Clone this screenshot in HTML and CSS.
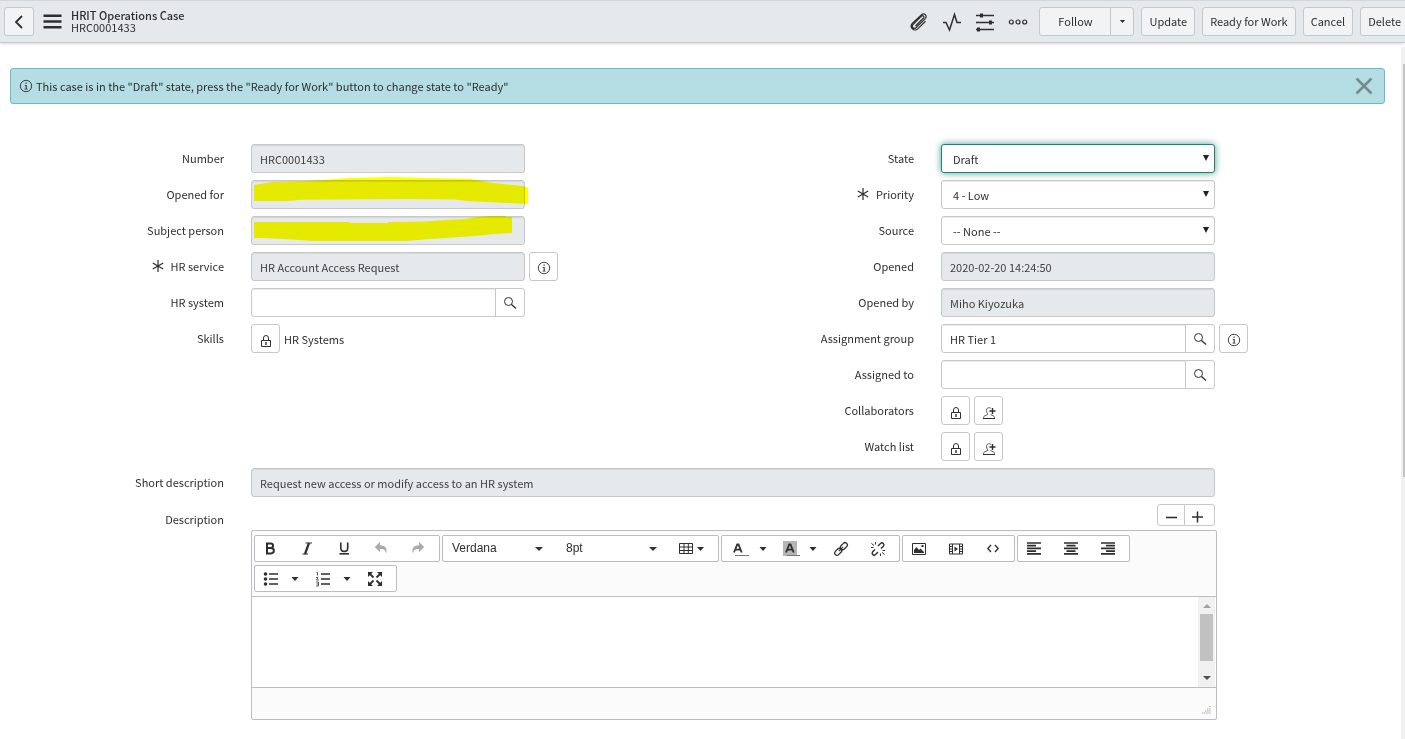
FILE: index.html
```html
<!DOCTYPE html>
<html lang="en">
<head>
<meta charset="utf-8">
<title>HRC0001433 | HRIT Operations Case</title>
<link rel="stylesheet" href="styles.css">
</head>
<body>
<svg class="sprite" aria-hidden="true">
  <symbol id="info" viewBox="0 0 14 14"><circle cx="7" cy="7" r="5.700" fill="none" stroke="currentColor" stroke-width=".9"/><path d="M6.500 3.500h1.200v1.300H6.500zM5.700 6h2v3.700h.9v.8H5.500v-.8h1.100V6.800h-.9z" fill="currentColor"/></symbol>
  <symbol id="search" viewBox="0 0 14 14"><circle cx="5.500" cy="5.500" r="4" fill="none" stroke="currentColor"/><path d="M8.500 8.500l4.500 4" stroke="currentColor" stroke-width="1.400"/></symbol>
  <symbol id="lock" viewBox="0 0 14 14"><path d="M4.500 6.500V4a2.500 2.500 0 0 1 5 0v2.500M2.500 6.500h9v6h-9z" fill="none" stroke="currentColor"/><path d="M6.300 8h1.400v3H6.300z" fill="currentColor"/></symbol>
  <symbol id="adduser" viewBox="0 0 14 14"><path d="M9 2.500C7.500 1 4.500 1.500 4.500 4.500c0 1.500.5 2 1 3v1L2.500 10c-.8.400-1 1-1 2.500h11c0-1.500-.2-2.100-1-2.500L8.500 8.500" fill="none" stroke="currentColor" stroke-width=".8"/><path d="M10.500 2v6M7.500 5h6" stroke="currentColor" stroke-width="1.400"/><path d="M1 12.500h12" stroke="currentColor"/></symbol>
  <symbol id="star" viewBox="0 0 12 12"><path d="M6 0v12M.8 3l10.400 6M11.200 3L.8 9" stroke="currentColor" stroke-width="1.200"/></symbol>
  <symbol id="caret" viewBox="0 0 8 4"><path d="M.5 0h7L4 4z" fill="currentColor"/></symbol>
</svg>

<header class="topbar">
  <div class="topbar-row">
    <button class="btn back" aria-label="Back"><svg width="10" height="14" viewBox="0 0 10 14"><path d="M8 1L2 7l6 6" fill="none" stroke="currentColor" stroke-width="1.800"/></svg></button>
    <button class="plain menu" aria-label="Menu"><svg width="19" height="15" viewBox="0 0 19 15"><path d="M.5 1.800h18M.5 7.500h18M.5 13.200h18" stroke="currentColor" stroke-width="2.600"/></svg></button>
    <h1 class="title"><span class="title-main">HRIT Operations Case</span><span>HRC0001433</span></h1>
    <nav class="tools" aria-label="Record tools">
      <button class="plain" aria-label="Attachments"><svg width="20" height="20" viewBox="0 0 20 20"><path d="M6.500 14l8-8c1.200-1.400-.6-3-2-1.800L4 12.700c-2 2.200.7 5 2.900 3L16.300 6.600c2.600-2.800-1.200-6.200-4-3.700L3.700 11c-4 4 1.300 9.600 5.300 5.600l7.500-7.400" fill="none" stroke="currentColor" stroke-width="1.200"/></svg></button>
      <button class="plain" aria-label="Activity stream"><svg width="20" height="20" viewBox="0 0 20 20"><path d="M1 10.500h3L7.500 18l5-15.500 2.500 8h4" fill="none" stroke="currentColor" stroke-width="1.500"/></svg></button>
      <button class="plain" aria-label="Personalize form"><svg width="20" height="20" viewBox="0 0 20 20"><path d="M1 3.500h18M1 10.500h18M1 17.500h18" stroke="currentColor" stroke-width="1.400"/><path d="M5 1.500h3v4H5zM14 8.500h3v4h-3zM2 15.500h3v4H2z" fill="currentColor"/></svg></button>
      <button class="plain" aria-label="More options"><svg width="20" height="20" viewBox="0 0 20 20"><g fill="none" stroke="currentColor" stroke-width="1.200"><circle cx="3.300" cy="10" r="2"/><circle cx="10" cy="10" r="2"/><circle cx="16.700" cy="10" r="2"/></g></svg></button>
    </nav>
    <div class="actions">
      <div class="split"><button class="btn follow">Follow</button><button class="btn follow-more" aria-label="Follow options"><svg width="7" height="3"><use href="#caret"/></svg></button></div>
      <button class="btn">Update</button>
      <button class="btn">Ready for Work</button>
      <button class="btn">Cancel</button>
      <button class="btn">Delete</button>
    </div>
  </div>
</header>

<div class="page">
  <main class="content">
    <div class="banner" role="status">
      <svg width="14" height="14"><use href="#info"/></svg>
      <span class="banner-text">This case is in the "Draft" state, press the "Ready for Work" button to change state to "Ready"</span>
      <button class="plain close" aria-label="Close"><svg width="18" height="18" viewBox="0 0 18 18"><path d="M1.500 1.500l15 15M16.500 1.500l-15 15" stroke="currentColor" stroke-width="2.600"/></svg></button>
    </div>

    <form class="form">
      <div class="columns">
        <div class="column">
          <div class="row"><label class="label" for="number">Number</label><div class="field"><input class="input" id="number" value="HRC0001433" readonly></div></div>
          <div class="row"><label class="label" for="openedfor">Opened for</label><div class="field marked"><input class="input" id="openedfor" readonly>
            <svg class="marker" width="280" height="32" viewBox="0 0 280 32"><path d="M3 9L12 7.500 21 6 56 5 79 3.500 98 2 139 1 177 2 221 3 242 7 272 10 277 12V28L256 27 216 25 204 23.500 156 23 51 23.700 36 25H3z" fill="#ff0"/></svg></div></div>
          <div class="row"><label class="label" for="subject">Subject person</label><div class="field marked"><input class="input" id="subject" readonly>
            <svg class="marker" width="280" height="32" viewBox="0 0 280 32"><path d="M3 10H98L99 11H137V10L174 9.500 194 8 214 7 222 5.500 239 4H254L255 5H261V21L244 22 224 24 194 26 179 27 154 29H62L42 27.500 14 26H3z" fill="#ff0"/></svg></div></div>
          <div class="row"><label class="label" for="service"><svg width="12" height="12"><use href="#star"/></svg>HR service</label><div class="field"><input class="input" id="service" value="HR Account Access Request" readonly></div><div class="aside"><button type="button" class="icon-btn" aria-label="Preview HR service"><svg width="14" height="14"><use href="#info"/></svg></button></div></div>
          <div class="row"><label class="label" for="system">HR system</label><div class="field"><input class="input joined" id="system"><button type="button" class="icon-btn lookup" aria-label="Look up HR system"><svg width="14" height="14"><use href="#search"/></svg></button></div></div>
          <div class="row"><span class="label">Skills</span><div class="field list"><button type="button" class="icon-btn low" aria-label="Unlock skills"><svg width="14" height="14"><use href="#lock"/></svg></button><span>HR Systems</span></div></div>
        </div>
        <div class="column">
          <div class="row"><label class="label" for="state">State</label><div class="field pick"><select class="input select active" id="state"><option>Draft</option></select></div></div>
          <div class="row"><label class="label" for="priority"><svg width="12" height="12"><use href="#star"/></svg>Priority</label><div class="field pick"><select class="input select" id="priority"><option>4 - Low</option></select></div></div>
          <div class="row"><label class="label" for="source">Source</label><div class="field pick"><select class="input select" id="source"><option>-- None --</option></select></div></div>
          <div class="row"><label class="label" for="opened">Opened</label><div class="field"><input class="input" id="opened" value="2020-02-20 14:24:50" readonly></div></div>
          <div class="row"><label class="label" for="openedby">Opened by</label><div class="field"><input class="input" id="openedby" value="Miho Kiyozuka" readonly></div></div>
          <div class="row"><label class="label" for="group">Assignment group</label><div class="field"><input class="input joined" id="group" value="HR Tier 1"><button type="button" class="icon-btn lookup" aria-label="Look up group"><svg width="14" height="14"><use href="#search"/></svg></button></div><div class="aside"><button type="button" class="icon-btn" aria-label="Preview group"><svg width="14" height="14"><use href="#info"/></svg></button></div></div>
          <div class="row"><label class="label" for="assigned">Assigned to</label><div class="field"><input class="input joined" id="assigned"><button type="button" class="icon-btn lookup" aria-label="Look up assignee"><svg width="14" height="14"><use href="#search"/></svg></button></div></div>
          <div class="row"><span class="label">Collaborators</span><div class="field list"><button type="button" class="icon-btn low" aria-label="Unlock collaborators"><svg width="14" height="14"><use href="#lock"/></svg></button><button type="button" class="icon-btn low" aria-label="Add me to collaborators"><svg width="14" height="14"><use href="#adduser"/></svg></button></div></div>
          <div class="row"><span class="label">Watch list</span><div class="field list"><button type="button" class="icon-btn low" aria-label="Unlock watch list"><svg width="14" height="14"><use href="#lock"/></svg></button><button type="button" class="icon-btn low" aria-label="Add me to watch list"><svg width="14" height="14"><use href="#adduser"/></svg></button></div></div>
        </div>
      </div>

      <div class="row wide"><label class="label" for="short">Short description</label><div class="field"><input class="input" id="short" value="Request new access or modify access to an HR system" readonly></div></div>

      <div class="row wide top">
        <label class="label" for="desc">Description</label>
        <div class="description">
          <div class="resize">
            <button type="button" class="size-btn" aria-label="Shrink"><svg width="13" height="13" viewBox="0 0 13 13"><path d="M1 7.500h11" stroke="currentColor" stroke-width="1.600"/></svg></button><button type="button" class="size-btn" aria-label="Grow"><svg width="13" height="13" viewBox="0 0 13 13"><path d="M1 7h11M6.500 1.500v11" stroke="currentColor" stroke-width="1.500"/></svg></button>
          </div>
          <div class="editor">
            <div class="toolbar">
              <div class="group">
                <button type="button" class="tool" aria-label="Bold"><svg width="16" height="16" viewBox="0 0 16 16"><path d="M5 2.500v10M4 2.500h4.500c3.400 0 3.400 4.600 0 4.600H5h4c3.800 0 3.800 5.400 0 5.400H4" fill="none" stroke="currentColor" stroke-width="2"/></svg></button>
                <button type="button" class="tool" aria-label="Italic"><svg width="16" height="16" viewBox="0 0 16 16"><path d="M6.500 2H13M3.500 13H9" stroke="currentColor"/><path d="M10 2l-4 11" stroke="currentColor" stroke-width="2.200"/></svg></button>
                <button type="button" class="tool" aria-label="Underline"><svg width="16" height="16" viewBox="0 0 16 16"><path d="M4.800 1.500V7c0 4.500 6.900 4.500 6.900 0V1.500" fill="none" stroke="currentColor" stroke-width="1.600"/><path d="M3.500 12.800H13" stroke="currentColor" stroke-width="1.600"/></svg></button>
                <button type="button" class="tool dim" aria-label="Undo"><svg width="16" height="16" viewBox="0 0 16 16"><path d="M7 1v3.200c5 0 8 2.800 6 8.800 0-3.700-2-5-6-5v3.200L1.800 6.100z" fill="currentColor"/></svg></button>
                <button type="button" class="tool dim" aria-label="Redo"><svg width="16" height="16" viewBox="0 0 16 16"><path d="M9 1v3.200c-5 0-8 2.800-6 8.800 0-3.700 2-5 6-5v3.200l5.200-5.100z" fill="currentColor"/></svg></button>
              </div>
              <div class="group selects">
                <span class="mini"><select aria-label="Font family"><option>Verdana</option></select></span>
                <span class="mini"><select aria-label="Font size"><option>8pt</option></select></span>
                <button type="button" class="tool table" aria-label="Table"><svg width="28" height="16" viewBox="0 0 28 16"><path d="M1.500 2.500h13v10h-13zM1.500 6h13M1.500 9.500h13M6 2.500v10M10.300 2.500v10" fill="none" stroke="currentColor"/><path d="M19 6h7L22.500 10z" fill="currentColor"/></svg></button>
              </div>
              <div class="group colors">
                <div class="pair"><button type="button" class="tool" aria-label="Text color"><svg width="18" height="16" viewBox="0 0 18 16"><path d="M2 11.500L5.200 3.500h1.300L9.700 11.500M3.200 8.700h5.300" fill="none" stroke="currentColor" stroke-width="1.800"/><path d="M3 14.500h14" stroke="#777"/></svg></button><button type="button" class="tool more" aria-label="Text colors"><svg width="8" height="4"><use href="#caret"/></svg></button></div>
                <div class="pair"><button type="button" class="tool" aria-label="Background color"><svg width="18" height="16" viewBox="0 0 18 16"><path d="M1 0h14v15H1z" fill="#b5b5b5"/><path d="M4 11.500L7.200 3.500h1.300l3.200 8M5.200 8.700h5.300" fill="none" stroke="currentColor" stroke-width="1.800"/><path d="M5 14.500h13" stroke="#777"/></svg></button><button type="button" class="tool more" aria-label="Background colors"><svg width="8" height="4"><use href="#caret"/></svg></button></div>
                <button type="button" class="tool" aria-label="Insert link"><svg width="16" height="16" viewBox="0 0 16 16"><g fill="none" stroke="currentColor" stroke-width="1.300" transform="rotate(-45 8 8)"><rect x="0" y="5.700" width="8" height="4.600" rx="2.300"/><rect x="8" y="5.700" width="8" height="4.600" rx="2.300"/><path d="M5 8h6"/></g></svg></button>
                <button type="button" class="tool" aria-label="Remove link"><svg width="16" height="16" viewBox="0 0 16 16"><g fill="none" stroke="currentColor" stroke-width="1.400"><path d="M8 5l2.500-2.500c2-1.800 4.500.8 2.800 2.700L11 7.500M8 11l-2.500 2.500c-2 1.800-4.500-.8-2.800-2.700L5 8.500"/><path d="M5.500 1v2.500M1.500 2.500l2.500 2M1 6.500h2.500M10.500 12.500V15M12 11.500l2.500 2M12.500 9.500H15" stroke-width="1"/></g></svg></button>
              </div>
              <div class="group media">
                <button type="button" class="tool" aria-label="Insert image"><svg width="16" height="16" viewBox="0 0 16 16"><path d="M1.500 2.500h13v11h-13z" fill="none" stroke="currentColor"/><path d="M3 12V9l2.500-3L8 9l1.500-1.500L13 11v1zM10.500 4h2v2h-2z" fill="currentColor"/></svg></button>
                <button type="button" class="tool" aria-label="Insert video"><svg width="16" height="16" viewBox="0 0 16 16"><path d="M1.500 3h13v10h-13zM4.500 3v10M11.500 3v10" fill="none" stroke="currentColor"/><path d="M1 5.500h3M1 8h3M1 10.500h3M12 5.500h3M12 8h3M12 10.500h3" stroke="currentColor" stroke-width="1.200"/><path d="M6.500 5.500v5L10 8z" fill="currentColor"/></svg></button>
                <button type="button" class="tool" aria-label="Source code"><svg width="16" height="16" viewBox="0 0 16 16"><path d="M6 4L2.800 7.500 6 11M10 4L13.200 7.500 10 11" fill="none" stroke="currentColor" stroke-width="1.300"/></svg></button>
              </div>
              <div class="group media">
                <button type="button" class="tool" aria-label="Align left"><svg width="16" height="16" viewBox="0 0 16 16"><path d="M1 2h14M1 4.700h9M1 7.400h14M1 10.100h9M1 12.800h14" stroke="currentColor" stroke-width="1.700"/></svg></button>
                <button type="button" class="tool" aria-label="Align center"><svg width="16" height="16" viewBox="0 0 16 16"><path d="M1 2h14M3.500 4.700h9M1 7.400h14M3.500 10.100h9M1 12.800h14" stroke="currentColor" stroke-width="1.700"/></svg></button>
                <button type="button" class="tool" aria-label="Align right"><svg width="16" height="16" viewBox="0 0 16 16"><path d="M1 2h14M6 4.700h9M1 7.400h14M6 10.100h9M1 12.800h14" stroke="currentColor" stroke-width="1.700"/></svg></button>
              </div>
              <div class="group lists">
                <div class="pair"><button type="button" class="tool" aria-label="Bullet list"><svg width="16" height="16" viewBox="0 0 16 16"><path d="M6 3h9M6 8h9M6 13h9" stroke="currentColor" stroke-width="1.700"/><g fill="currentColor"><circle cx="2.500" cy="3" r="1.800"/><circle cx="2.500" cy="8" r="1.800"/><circle cx="2.500" cy="13" r="1.800"/></g></svg></button><button type="button" class="tool more" aria-label="Bullet styles"><svg width="8" height="4"><use href="#caret"/></svg></button></div>
                <div class="pair"><button type="button" class="tool" aria-label="Numbered list"><svg width="16" height="16" viewBox="0 0 16 16"><path d="M6 3h9M6 8h9M6 13h9" stroke="currentColor" stroke-width="1.700"/><path d="M1.500 1.500h1v3M1 6.500h2L1.500 9H4M1 11h2.500v4H1M1.500 13h2" fill="none" stroke="currentColor" stroke-width=".8"/></svg></button><button type="button" class="tool more" aria-label="Number styles"><svg width="8" height="4"><use href="#caret"/></svg></button></div>
                <button type="button" class="tool" aria-label="Fullscreen"><svg width="16" height="16" viewBox="0 0 16 16"><path d="M1 1h5L1 6zM15 1v5l-5-5zM1 15v-5l5 5zM15 15h-5l5-5z" fill="currentColor"/><path d="M2.500 2.500L6.500 6.500M13.500 2.500L9.500 6.500M2.500 13.500L6.500 9.500M13.500 13.500L9.500 9.500" stroke="currentColor" stroke-width="1.800"/></svg></button>
              </div>
            </div>
            <div class="edit-area">
              <textarea id="desc"></textarea>
              <div class="scroll" aria-hidden="true"><span class="arrow up"></span><span class="thumb"></span><span class="arrow down"></span></div>
            </div>
            <div class="statusbar"><svg width="10" height="9" viewBox="0 0 10 9"><path d="M0 8h9M3 6h6M5 4h4M7 1.500h2" stroke="#b3aaa5" stroke-width="1.200" stroke-dasharray="1.500 .6"/></svg></div>
          </div>
        </div>
      </div>
    </form>
  </main>
  <div class="rail" aria-hidden="true"><span class="rail-thumb"></span></div>
</div>
</body>
</html>
```
FILE: styles.css
```css
* { box-sizing: border-box; }

body {
  margin: 0;
  min-height: 100vh;
  display: flex;
  flex-direction: column;
  overflow: hidden;
  background: #fff;
  color: #2e2e2e;
  font: 11px/16px "Noto Sans CJK JP", "Noto Sans", sans-serif;
}

button, input, select, textarea { font: inherit; color: inherit; margin: 0; }
button { padding: 0; cursor: pointer; }
svg { display: block; flex: none; }
.sprite { position: absolute; width: 0; height: 0; }
.plain { display: flex; border: 0; background: none; }

/* Top bar */
.topbar {
  overflow: hidden;
  border-top: 1px solid #d3d6d9;
  border-bottom: 1px solid #c6c9cc;
  background: #e6e9eb;
  box-shadow: 0 1px 3px rgba(0, 0, 0, .15);
}
.topbar-row {
  display: flex;
  align-items: center;
  height: 41px;
  margin-right: -4px;
  padding-left: 4px;
  white-space: nowrap;
}
.btn {
  height: 29px;
  padding: 0 7px;
  border: 1px solid #c6c8ca;
  border-radius: 3px;
  background: #f2f3f5;
}
.back { display: flex; align-items: center; justify-content: center; width: 30px; }
.menu { margin: 0 9px; }
.title {
  display: flex;
  flex: 1;
  flex-direction: column;
  margin: 0;
  padding-bottom: 2px;
  font-size: 11px;
  font-weight: 400;
  line-height: 12px;
}
.title-main { font-weight: 500; }
.tools { display: flex; gap: 13px; margin-right: 11px; }
.actions { display: flex; gap: 7px; padding-bottom: 1px; }
.split { display: flex; }
.follow { width: 72px; border-radius: 3px 0 0 3px; }
.follow-more {
  display: flex;
  align-items: center;
  justify-content: center;
  width: 24px;
  margin-left: -1px;
  border-radius: 0 3px 3px 0;
}

/* Page */
.page { display: flex; flex: 1; padding-top: 4px; }
.content { flex: 1; min-width: 0; padding: 21px 0 0 10px; }
.rail { width: 4px; padding: 17px 0 0 2px; background: #f1f1f1; }
.rail-thumb { display: block; height: 413px; background: #c1c1c1; }

.banner {
  display: flex;
  align-items: center;
  height: 36px;
  margin-right: 16px;
  padding: 0 11px 0 8px;
  border: 1px solid #66bccb;
  border-radius: 3px;
  background: #b5dde4;
}
.banner-text { flex: 1; margin-left: 3px; }
.close { color: #748b90; }

/* Form */
.form { margin: 40px 11px 0 0; }
.columns { display: grid; grid-template-columns: 1fr 1fr; }
.row {
  display: grid;
  grid-template-columns: 241fr 274fr 175fr;
  align-items: center;
  min-height: 29px;
  margin-bottom: 7px;
}
.row.wide { grid-template-columns: 241fr 964fr 175fr; }
.row.top { align-items: start; }
.label {
  display: flex;
  align-items: center;
  justify-content: flex-end;
  gap: 7px;
  padding: 0 27px 1px 0;
}
.top .label { padding-top: 7px; }
.field { display: flex; min-width: 0; }
.list { align-items: center; gap: 4px; }
.aside { padding-left: 4px; }
.input {
  flex: 1;
  width: 100%;
  min-width: 0;
  height: 29px;
  padding: 0 8px;
  border: 1px solid #c6c8ca;
  border-radius: 3px;
  background: #fff;
  box-shadow: inset 0 1px 1px rgba(0, 0, 0, .08);
}
.input:read-only:not(select) { background: #e6e9eb; color: #404040; }
.joined { border-radius: 3px 0 0 3px; }
.select { appearance: none; padding-left: 11px; }
.active {
  border-color: #1f8476;
  box-shadow: 0 0 7px rgba(31, 132, 118, .8);
}
.pick, .marked { position: relative; }
.pick::after {
  content: "";
  position: absolute;
  top: 11px;
  right: 6px;
  border: solid transparent;
  border-width: 6px 3px 0;
  border-top-color: #222;
}
.marker {
  position: absolute;
  top: -4px;
  left: 0;
  mix-blend-mode: multiply;
  pointer-events: none;
}
.icon-btn {
  display: flex;
  align-items: center;
  justify-content: center;
  width: 29px;
  height: 29px;
  border: 1px solid #c6c8ca;
  border-radius: 3px;
  background: #fff;
}
.low { padding-top: 5px; }
.aside .icon-btn { padding-top: 3px; }
.lookup { width: 30px; margin-left: -1px; border-radius: 0 3px 3px 0; }

/* Description editor */
.resize { display: flex; justify-content: flex-end; margin-bottom: 4px; }
.size-btn {
  display: flex;
  align-items: center;
  width: 28px;
  height: 22px;
  padding: 3px 0 0 7px;
  border: 1px solid #c6c8ca;
  border-radius: 3px 0 0 3px;
  background: #fff;
}
.size-btn + .size-btn { width: 31px; margin-left: -1px; padding-left: 6px; border-radius: 0 3px 3px 0; }
.editor {
  margin-right: -2px;
  border: 1px solid #babdc3;
  border-radius: 2px;
  background: #fbfbfb;
}
.toolbar {
  display: flex;
  flex-wrap: wrap;
  gap: 3px 2px;
  padding: 4px 2px;
  border-bottom: 1px solid #babdc3;
}
.group {
  display: flex;
  gap: 7px;
  height: 27px;
  padding-right: 6px;
  border: 1px solid #babdc3;
  border-radius: 2px;
  background: #fff;
}
.pair { display: flex; }
.tool {
  display: flex;
  align-items: center;
  justify-content: center;
  width: 30px;
  border: 0;
  background: none;
}
.dim { color: #aaa; }
.more { width: 13px; }
.selects { gap: 0; font: 12px/16px "Liberation Sans", Arial, sans-serif; }
.mini { position: relative; width: 114px; }
.mini select {
  width: 100%;
  height: 100%;
  padding: 0 9px 2px;
  border: 0;
  background: none;
  appearance: none;
}
.mini::after {
  content: "";
  position: absolute;
  top: 11px;
  right: 14px;
  border: solid transparent;
  border-width: 4px 4px 0;
  border-top-color: #333;
  pointer-events: none;
}
.table { width: 41px; }
.colors { padding-left: 4px; }
.media { padding-left: 1px; }
.lists { gap: 5px; padding-left: 1px; }
.lists .more { width: 17px; }
.edit-area { display: flex; height: 91px; border-bottom: 1px solid #babdc3; background: #fff; }
.edit-area textarea { flex: 1; border: 0; outline: 0; resize: none; background: none; }
.scroll {
  display: flex;
  flex-direction: column;
  align-items: center;
  width: 17px;
  margin-right: 1px;
  padding: 7px 0;
  background: #f1f1f1;
}
.arrow { border: solid transparent; border-width: 0 4px 4px; }
.up { border-bottom-color: #a3a3a3; }
.down { margin-top: auto; border-width: 4px 4px 0; border-top-color: #505050; }
.thumb { width: 13px; height: 47px; margin-top: 6px; background: #c1c1c1; }
.statusbar { display: flex; justify-content: flex-end; align-items: flex-end; height: 31px; padding: 0 4px 5px; }
```
